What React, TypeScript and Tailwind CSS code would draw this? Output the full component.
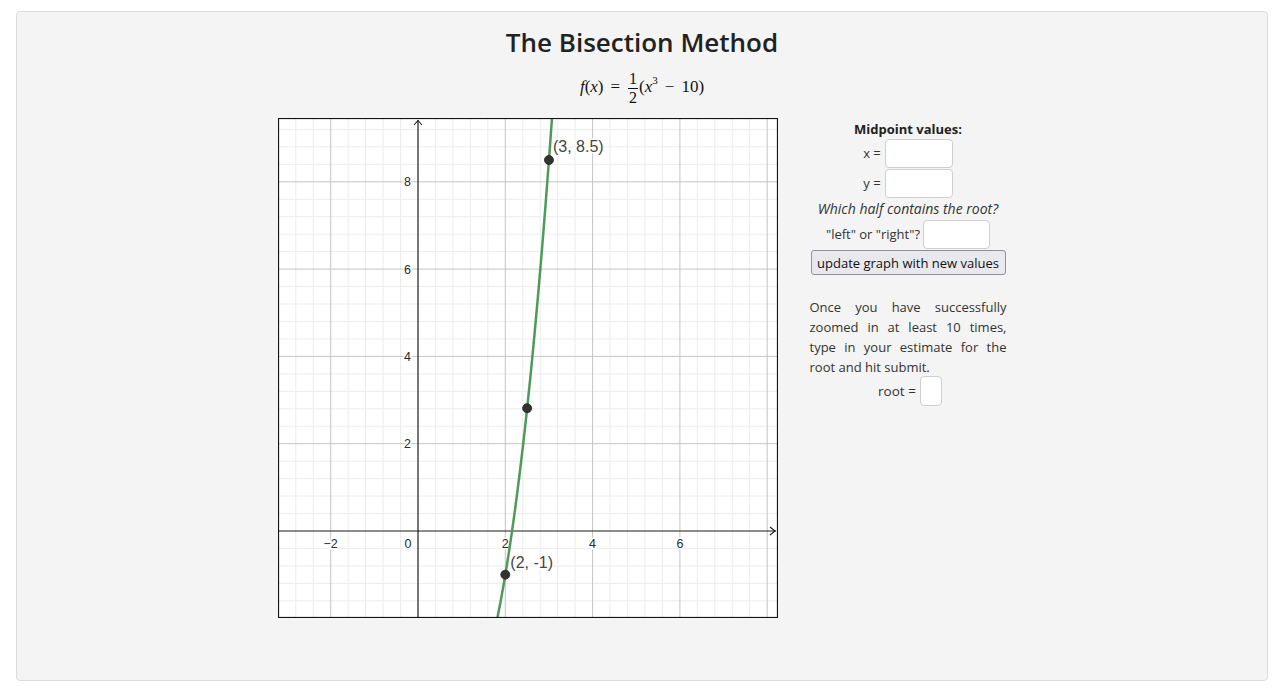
import React from "react";

const S = 43.65;
const OX = 140;
const OY = 413;
const px = (x: number) => OX + x * S;
const py = (y: number) => OY - y * S;

function Graph() {
  const minor: React.ReactNode[] = [];
  const major: React.ReactNode[] = [];
  for (let i = -8; i <= 21; i++) {
    const v = i * 0.4;
    const X = px(v);
    if (X < 0 || X > 500) continue;
    const isMajor = i % 5 === 0;
    if (i === 0) continue;
    (isMajor ? major : minor).push(
      <line key={"vx" + i} x1={X} x2={X} y1={0} y2={500} stroke={isMajor ? "#c4c4c4" : "#ececec"} strokeWidth={1} />
    );
  }
  for (let i = -5; i <= 24; i++) {
    const v = i * 0.4;
    const Y = py(v);
    if (Y < 0 || Y > 500) continue;
    const isMajor = i % 5 === 0;
    if (i === 0) continue;
    (isMajor ? major : minor).push(
      <line key={"hy" + i} x1={0} x2={500} y1={Y} y2={Y} stroke={isMajor ? "#c4c4c4" : "#ececec"} strokeWidth={1} />
    );
  }
  const pts: string[] = [];
  for (let x = 1.7; x <= 3.2; x += 0.01) {
    const y = 0.5 * (x * x * x - 10);
    pts.push(`${px(x).toFixed(2)},${py(y).toFixed(2)}`);
  }
  const xl = [-2, 2, 4, 6];
  const yl = [2, 4, 6, 8];
  const font = { fontFamily: '"Liberation Sans", Arial, sans-serif' };
  return (
    <svg width={500} height={500} className="block" style={font}>
      <rect x={0} y={0} width={500} height={500} fill="#ffffff" />
      {minor}
      {major}
      <line x1={px(0)} x2={px(0)} y1={2} y2={500} stroke="#1a1a1a" strokeWidth={1.2} />
      <line x1={0} x2={498} y1={py(0)} y2={py(0)} stroke="#1a1a1a" strokeWidth={1.2} />
      <polyline points={`${px(0) - 4},7 ${px(0)},2.5 ${px(0) + 4},7`} fill="none" stroke="#1a1a1a" strokeWidth={1.1} />
      <polyline points={`492,${py(0) - 4} 497,${py(0)} 492,${py(0) + 4}`} fill="none" stroke="#1a1a1a" strokeWidth={1.1} />
      {yl.map((v) => (
        <text key={"yl" + v} x={px(0) - 7} y={py(v) + 4.5} fontSize={12.5} fill="#2a2a2a" textAnchor="end" stroke="#fff" strokeWidth={3} paintOrder="stroke">
          {v}
        </text>
      ))}
      {xl.map((v) => (
        <text key={"xl" + v} x={px(v)} y={py(0) + 16.5} fontSize={12.5} fill="#2a2a2a" textAnchor="middle" stroke="#fff" strokeWidth={3} paintOrder="stroke">
          {v < 0 ? "\u2212" + Math.abs(v) : v}
        </text>
      ))}
      <text x={px(0) - 10} y={py(0) + 16.5} fontSize={12.5} fill="#2a2a2a" textAnchor="middle" stroke="#fff" strokeWidth={3} paintOrder="stroke">
        0
      </text>
      <polyline points={pts.join(" ")} fill="none" stroke="#4f9a58" strokeWidth={2.5} />
      <circle cx={px(3)} cy={py(8.5)} r={4.5} fill="#333" stroke="#222" strokeWidth={0.8} />
      <circle cx={px(2)} cy={py(-1)} r={4.5} fill="#333" stroke="#222" strokeWidth={0.8} />
      <circle cx={px(2.5)} cy={py(2.8125)} r={4.5} fill="#333" stroke="#222" strokeWidth={0.8} />
      <text x={px(3) + 4} y={py(8.5) - 7.5} fontSize={16} fill="#444" stroke="#fff" strokeWidth={3} paintOrder="stroke">
        (3, 8.5)
      </text>
      <text x={px(2) + 5} y={py(-1) - 7} fontSize={16} fill="#444" stroke="#fff" strokeWidth={3} paintOrder="stroke">
        (2, -1)
      </text>
      <rect x={0.5} y={0.5} width={499} height={499} fill="none" stroke="#111" strokeWidth={1.2} />
    </svg>
  );
}

function Input({ w }: { w: string }) {
  return <span className={`inline-block ${w} h-[29px] align-middle bg-white border border-[#cfcfcf] rounded-[4px]`} />;
}

export default function App() {
  return (
    <div className="w-[1284px] h-[689px] bg-white pt-[11px] px-[16px]" style={{ fontFamily: '"Open Sans", "Noto Sans", sans-serif' }}>
      <div className="h-[670px] bg-[#f4f4f4] border border-[#dcdcdc] rounded-[4px] pt-[12px]">
        <h1 className="text-center text-[26px] leading-[36px] font-semibold text-[#222]">The Bisection Method</h1>
        <div className="h-[58px] flex items-center justify-center text-[#111]" style={{ fontFamily: '"Liberation Serif", "DejaVu Serif", serif' }}>
          <div className="flex items-center text-[17px] pb-[4px]">
            <span className="italic">f</span>
            <span>(</span>
            <span className="italic">x</span>
            <span>)</span>
            <span className="mx-[7px]">=</span>
            <span className="inline-flex flex-col items-center mx-[1px] text-[16px] leading-[16px] translate-y-[1px]">
              <span className="px-[1px]">1</span>
              <span className="w-[10px] h-[1px] bg-[#111] my-[1px]"></span>
              <span className="px-[1px]">2</span>
            </span>
            <span>(</span>
            <span className="italic">x</span>
            <span className="text-[11px] -translate-y-[7px]">3</span>
            <span className="mx-[7px]">−</span>
            <span>10)</span>
          </div>
        </div>
        <div className="flex justify-center gap-[32px]">
          <Graph />
          <div className="w-[197px] text-[13px] text-[#333] text-center leading-[18px] pt-[2px]">
            <div className="font-bold text-[#222]">Midpoint values:</div>
            <div className="h-[30px] flex items-center justify-center">
              <span className="mr-[4px]">x =</span>
              <Input w="w-[68px]" />
            </div>
            <div className="h-[30px] flex items-center justify-center">
              <span className="mr-[4px]">y =</span>
              <Input w="w-[68px]" />
            </div>
            <div className="italic text-[14px] mt-[2px]">Which half contains the root?</div>
            <div className="h-[30px] flex items-center justify-center mt-[1px]">
              <span className="mr-[3px]">"left" or "right"?</span>
              <Input w="w-[67px]" />
            </div>
            <div className="mt-[1px]">
              <button className="w-[195px] h-[25px] bg-[#e9e9ed] border border-[#8f8f9d] rounded-[3px] text-[13px] text-[#111] leading-[20px]">
                update graph with new values
              </button>
            </div>
            <p className="mt-[22px] text-justify leading-[20px]">
              Once you have successfully zoomed in at least 10 times, type in your estimate for the root and hit submit.
            </p>
            <div className="h-[30px] flex items-center justify-center mt-[-1px]">
              <span className="mr-[4px] ml-[4px] text-[13.5px]">root =</span>
              <span className="inline-block w-[22px] h-[30px] bg-white border border-[#cfcfcf] rounded-[4px]" />
            </div>
          </div>
        </div>
      </div>
    </div>
  );
}
